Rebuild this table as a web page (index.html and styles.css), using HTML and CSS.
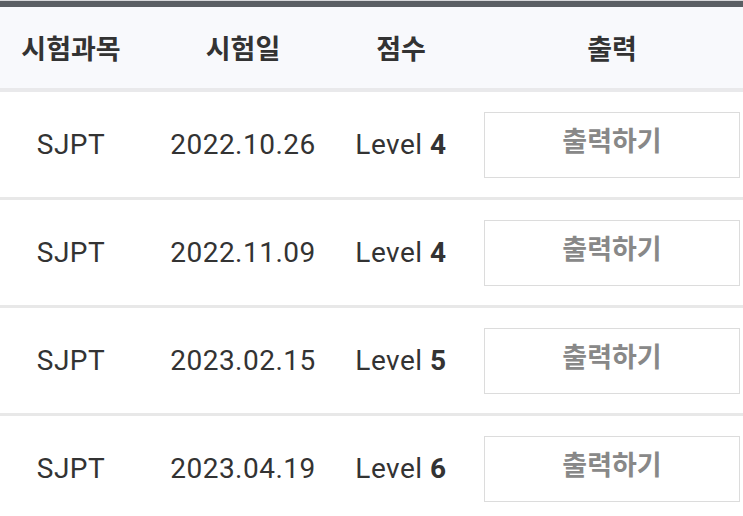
FILE: index.html
```html
<!DOCTYPE html>
<html lang="ko">
<head>
<meta charset="utf-8">
<link rel="stylesheet" href="styles.css">
</head>
<body>
<div class="topbar"></div>
<div class="table">
  <div class="row head">
    <div class="cell">시험과목</div>
    <div class="cell">시험일</div>
    <div class="cell">점수</div>
    <div class="cell out"><span class="box">출력</span></div>
  </div>
  <div class="row">
    <div class="cell">SJPT</div>
    <div class="cell">2022.10.26</div>
    <div class="cell">Level <b>4</b></div>
    <div class="cell out"><button class="btn">출력하기</button></div>
  </div>
  <div class="row">
    <div class="cell">SJPT</div>
    <div class="cell">2022.11.09</div>
    <div class="cell">Level <b>4</b></div>
    <div class="cell out"><button class="btn">출력하기</button></div>
  </div>
  <div class="row">
    <div class="cell">SJPT</div>
    <div class="cell">2023.02.15</div>
    <div class="cell">Level <b>5</b></div>
    <div class="cell out"><button class="btn">출력하기</button></div>
  </div>
  <div class="row">
    <div class="cell">SJPT</div>
    <div class="cell">2023.04.19</div>
    <div class="cell">Level <b>6</b></div>
    <div class="cell out"><button class="btn">출력하기</button></div>
  </div>
</div>
</body>
</html>
```
FILE: styles.css
```css
html, body {
  margin: 0;
  padding: 0;
  background: #ffffff;
}
body {
  font-family: Roboto, "Noto Sans CJK KR", sans-serif;
  color: #333333;
  overflow: hidden;
}
.topbar {
  height: 6px;
  border-top: 1px solid #d8d9db;
  background: #5b5f64;
}
.row {
  display: grid;
  grid-template-columns: 142px 202px 114px 1fr;
  align-items: center;
  height: 105px;
  border-bottom: 3px solid #e8e8e8;
  font-size: 28px;
  letter-spacing: 0.5px;
}
.row.head {
  height: 81px;
  background: #f8f9fc;
  border-bottom: 4px solid #e9e9eb;
  font-family: "Noto Sans CJK KR", sans-serif;
  font-weight: 700;
  font-size: 27px;
  letter-spacing: 0;
  color: #333333;
}
.cell {
  text-align: center;
  white-space: nowrap;
}
.cell b {
  font-weight: 700;
}
.cell.out {
  text-align: left;
  padding-left: 26px;
}
.box {
  display: inline-block;
  width: 256px;
  text-align: center;
}
.btn {
  display: block;
  width: 256px;
  height: 66px;
  box-sizing: border-box;
  border: 1.5px solid #dcdcdc;
  background: #ffffff;
  padding: 0 0 10px;
  font-family: "Noto Sans CJK KR", sans-serif;
  font-weight: 700;
  font-size: 27px;
  letter-spacing: 0;
  color: #888888;
  text-align: center;
}
```
